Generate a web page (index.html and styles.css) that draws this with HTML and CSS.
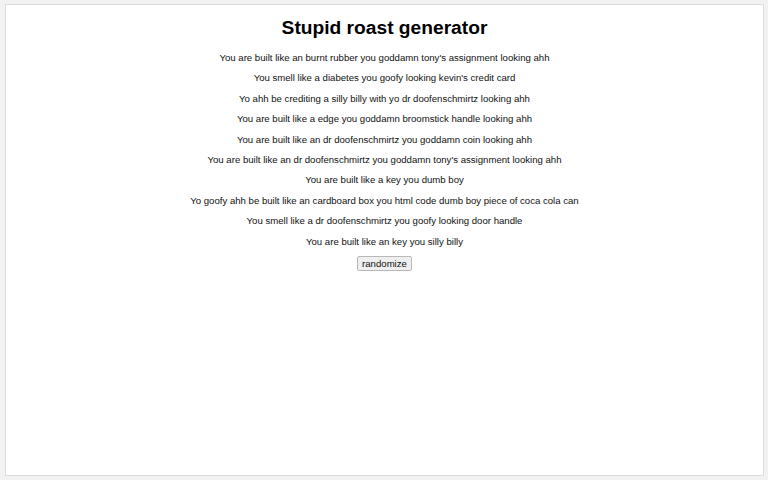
FILE: index.html
```html
<!DOCTYPE html>
<html>
<head>
  <title>Stupid roast generator</title>
  <link rel="stylesheet" href="styles.css">
</head>
<body>
  <div class="page">
    <h1>Stupid roast generator</h1>
    <div id="roasts">
      <p>You are built like an burnt rubber you goddamn tony's assignment looking ahh</p>
      <p>You smell like a diabetes you goofy looking kevin's credit card</p>
      <p>Yo ahh be crediting a silly billy with yo dr doofenschmirtz looking ahh</p>
      <p>You are built like a edge you goddamn broomstick handle looking ahh</p>
      <p>You are built like an dr doofenschmirtz you goddamn coin looking ahh</p>
      <p>You are built like an dr doofenschmirtz you goddamn tony's assignment looking ahh</p>
      <p>You are built like a key you dumb boy</p>
      <p>Yo goofy ahh be built like an cardboard box you html code dumb boy piece of coca cola can</p>
      <p>You smell like a dr doofenschmirtz you goofy looking door handle</p>
      <p>You are built like an key you silly billy</p>
    </div>
    <button class="btn-randomize" type="button">randomize</button>
  </div>
</body>
</html>
```

FILE: styles.css
```css
html, body {
  height: 100%;
}

body {
  font-family: "Liberation Sans", Arial, sans-serif;
  background-color: #f2f2f2;
  margin: 0;
  padding: 4px 4px 4px 5px;
  box-sizing: border-box;
}

.page {
  height: 100%;
  box-sizing: border-box;
  background-color: #fff;
  border: 1px solid #dcdcdc;
  text-align: center;
  padding-top: 12px;
}

h1 {
  font-size: 19.2px;
  margin: 0 0 9px;
  line-height: 22px;
}

#roasts p {
  font-size: 9.6px;
  line-height: 20.4px;
  margin: 0;
  color: #111;
}

.btn-randomize {
  font-family: "Liberation Sans", Arial, sans-serif;
  font-size: 9.6px;
  line-height: 11px;
  margin-top: 4px;
  padding: 1px 4px;
  background-color: #efefef;
  border: 1px solid #b8b8b8;
  border-radius: 2px;
  color: #111;
}
```
